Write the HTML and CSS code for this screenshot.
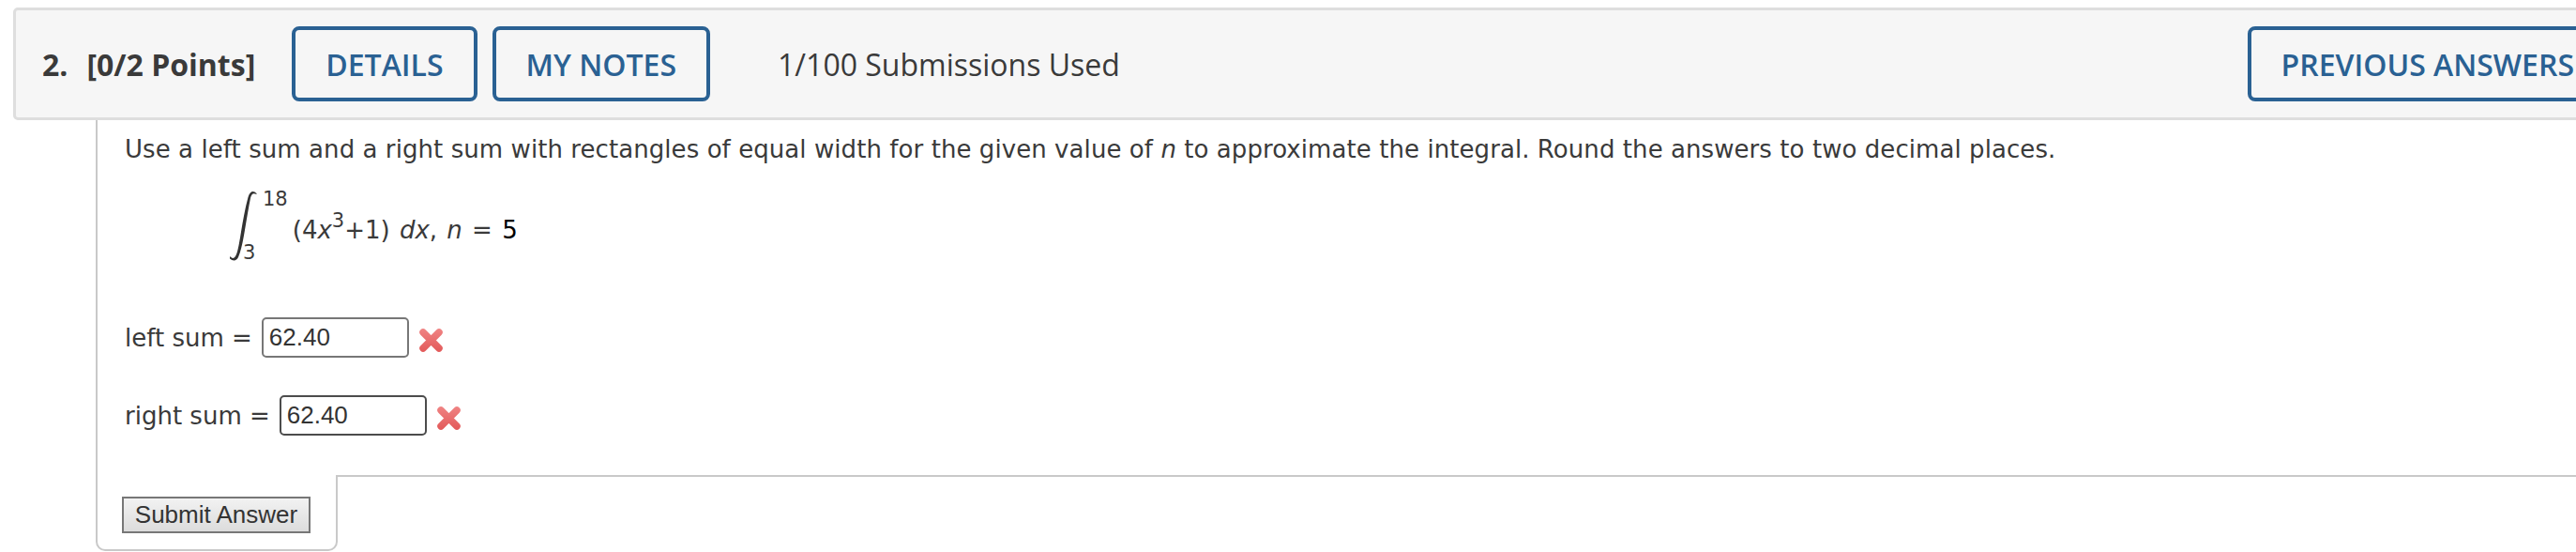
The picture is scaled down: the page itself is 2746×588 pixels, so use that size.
FILE: index.html
```html
<!DOCTYPE html>
<html lang="en">

<head>
  <meta charset="UTF-8">
  <meta name="viewport" content="width=device-width, initial-scale=1.0">
  <title>Question 2</title>
  <link rel="stylesheet" href="styles.css">
</head>

<body>

  <div class="question">
    <div class="question-head">
      <span class="question-num">2.</span>
      <span class="question-points">[0/2 Points]</span>
      <button class="head-btn details-btn">DETAILS</button>
      <button class="head-btn">MY NOTES</button>
      <span class="submissions">1/100 Submissions Used</span>
      <button class="head-btn prev-btn">PREVIOUS ANSWERS</button>
    </div>

    <div class="question-body">
      <p class="prompt">Use a left sum and a right sum with rectangles of equal width for the given value of <i>n</i> to approximate the integral. Round the answers to two decimal places.</p>

      <div class="formula">
        <svg class="integral-sign" width="32" height="78" viewBox="0 0 32 78" aria-label="integral">
          <path d="M30.5 3 C27 -0.5 23.5 0.5 21.5 7 C18 20 16 32 14 44 C12 56 10.5 66 8 70 C6 73 4 72 2 70 L2 72.5 C5 75 9 75.5 11 71 C14 64 16 54 18 42 C20 30 22 18 24 8 C25 3.5 27 2 30.5 4 Z" fill="#333"/>
        </svg>
        <div class="limits">
          <span class="limit-top">18</span>
          <span class="limit-bottom">3</span>
        </div>
        <span class="expr">(4<i>x</i><sup>3</sup>+1) <i>dx</i>, <i>n</i> = <span class="num">5</span></span>
      </div>

      <div class="answer-row">
        <label class="answer-label">left sum =</label>
        <input class="answer-input" type="text" value="62.40">
        <svg class="wrong-mark" width="27" height="27" viewBox="0 0 27 27"><use href="#cross"/></svg>
      </div>
      <div class="answer-row">
        <label class="answer-label">right sum =</label>
        <input class="answer-input focused" type="text" value="62.40">
        <svg class="wrong-mark" width="27" height="27" viewBox="0 0 27 27"><use href="#cross"/></svg>
      </div>
    </div>

    <div class="question-foot">
      <div class="submit-tab">
        <button class="submit-btn">Submit Answer</button>
      </div>
      <div class="foot-rest"></div>
    </div>
  </div>

  <svg width="0" height="0" class="defs">
    <defs>
      <linearGradient id="crossFill" gradientUnits="userSpaceOnUse" x1="0" y1="0" x2="0" y2="27">
        <stop offset="0" stop-color="#f08585"/>
        <stop offset="1" stop-color="#e25858"/>
      </linearGradient>
      <path id="cross" d="M5 5 L22 22 M22 5 L5 22" fill="none" stroke="url(#crossFill)" stroke-width="7.5" stroke-linecap="round"/>
    </defs>
  </svg>

</body>
</html>
```

FILE: styles.css
```css
html, body {
  margin: 0;
  padding: 0;
  overflow: hidden;
  background: #fff;
}

.question {
  width: 2800px;
  margin: 8px 0 0 14px;
  color: #3a3a3a;
}

.question-head {
  display: flex;
  align-items: center;
  height: 114px;
  background: #f6f6f6;
  border: 3px solid #dedede;
  border-radius: 5px;
  font-family: "Open Sans", sans-serif;
  font-size: 32px;
  padding-left: 28px;
}

.question-num {
  font-weight: 700;
  margin-right: 20px;
}

.question-points {
  font-weight: 700;
  margin-right: 39px;
}

.head-btn {
  height: 80px;
  padding: 0 32px;
  background: transparent;
  border: 4px solid #2a6193;
  border-radius: 8px;
  color: #2a6193;
  font-family: "Open Sans", sans-serif;
  font-size: 32px;
  font-weight: 600;
}

.details-btn {
  margin-right: 16px;
}

.submissions {
  margin-left: 72px;
}

.prev-btn {
  margin-left: auto;
  margin-right: 31px;
}

.question-body {
  margin-left: 88px;
  border-left: 2px solid #c9c9c9;
  padding: 0 0 42px 29px;
  font-family: "DejaVu Sans", sans-serif;
  font-size: 26px;
}

.prompt {
  margin: 0;
  padding-top: 11px;
  line-height: 40px;
  letter-spacing: 0.07px;
}

.formula {
  display: flex;
  align-items: flex-start;
  margin: 24px 0 0 110px;
  height: 78px;
}

.integral-sign {
  filter: blur(0.5px);
}

.limits {
  display: flex;
  flex-direction: column;
  justify-content: space-between;
  height: 78px;
  margin-left: -16px;
  font-size: 21px;
  line-height: 24px;
}

.limit-top {
  margin: -3px 0 0 21px;
}

.expr {
  margin-left: 5px;
  margin-top: 22px;
  line-height: 40px;
  font-size: 26px;
  word-spacing: 2px;
}

.expr sup {
  font-size: 21px;
  line-height: 0;
  vertical-align: 12px;
}

.num {
  color: #000;
}

.answer-row {
  display: flex;
  align-items: center;
  height: 43px;
  margin-top: 40px;
}

.formula + .answer-row {
  margin-top: 57px;
}

.answer-label {
  margin-right: 10px;
}

.answer-input {
  box-sizing: border-box;
  width: 157px;
  height: 43px;
  padding: 0 6px;
  border: 2px solid #777;
  border-radius: 5px;
  color: #333;
  font-family: "Liberation Sans", sans-serif;
  font-size: 26px;
}

.answer-input.focused {
  border-color: #4c4c4c;
}

.wrong-mark {
  margin: 5px 0 0 10px;
  filter: blur(0.4px);
}

.question-foot {
  display: flex;
  margin-left: 88px;
}

.submit-tab {
  box-sizing: border-box;
  width: 258px;
  height: 81px;
  border: 2px solid #c9c9c9;
  border-top: none;
  border-radius: 0 0 10px 10px;
  padding: 23px 0 0 26px;
}

.foot-rest {
  flex: 1;
  border-top: 2px solid #c9c9c9;
}

.submit-btn {
  box-sizing: border-box;
  width: 201px;
  height: 39px;
  padding: 0;
  border: 2px solid #777;
  background: linear-gradient(#f2f2f2, #dcdcdc);
  color: #333;
  font-family: "Liberation Sans", sans-serif;
  font-size: 26px;
}

.defs {
  position: absolute;
}
```
